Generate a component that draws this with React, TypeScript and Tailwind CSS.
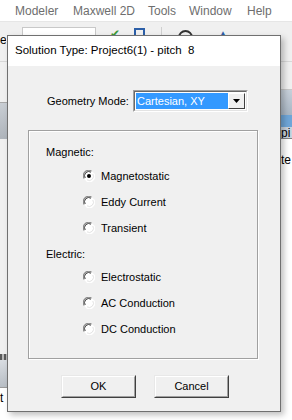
import React from 'react';

const menuItems = [
  { label: 'Modeler', w: 'w-[58px]' },
  { label: 'Maxwell 2D', w: 'w-[75px]' },
  { label: 'Tools', w: 'w-[41px]' },
  { label: 'Window', w: 'w-[58px]' },
  { label: 'Help', w: 'w-[40px]' },
];

function Radio({ checked }: { checked?: boolean }) {
  return (
    <svg width="12" height="12" viewBox="0 0 12 12" className="shrink-0">
      <circle cx="6" cy="6" r="5.5" fill="#ffffff" />
      <path d="M1.2 8.5 A5.3 5.3 0 0 1 8.5 1.2" fill="none" stroke="#8a8a8a" strokeWidth="1.2" />
      <path d="M2.2 8 A4.2 4.2 0 0 1 8 2.2" fill="none" stroke="#404040" strokeWidth="1" />
      <path d="M10.8 3.5 A5.3 5.3 0 0 1 3.5 10.8" fill="none" stroke="#ffffff" strokeWidth="1.2" />
      <path d="M9.8 4 A4.2 4.2 0 0 1 4 9.8" fill="none" stroke="#e3e3e3" strokeWidth="1" />
      {checked && <circle cx="6" cy="6" r="2" fill="#000000" />}
    </svg>
  );
}

function RadioRow({ label, checked }: { label: string; checked?: boolean }) {
  return (
    <div className="flex items-center h-[26px] pl-[54px]">
      <Radio checked={checked} />
      <span className="ml-[6px] text-[11px] text-black whitespace-nowrap">{label}</span>
    </div>
  );
}

function Button({ label }: { label: string }) {
  return (
    <div className="w-[75px] h-[23px] border border-t-[#e8e8e8] border-l-[#e8e8e8] border-r-[#404040] border-b-[#404040] bg-[#f0f0f0]">
      <div className="w-full h-full border border-t-white border-l-white border-r-[#a0a0a0] border-b-[#a0a0a0] flex items-center justify-center text-[11px] text-black">
        {label}
      </div>
    </div>
  );
}

export default function App() {
  return (
    <div className="relative w-[292px] h-[420px] overflow-hidden bg-white" style={{ fontFamily: '"Liberation Sans", Arial, sans-serif' }}>
      {/* Menu bar */}
      <div className="h-[22px] bg-white flex items-center pl-[15px] text-[12px] text-[#6e6e6e] border-b border-[#e6e6e6] whitespace-nowrap">
        {menuItems.map((m) => (
          <span key={m.label} className={`${m.w} shrink-0`}>{m.label}</span>
        ))}
      </div>

      {/* Toolbar behind the dialog */}
      <div className="h-[40px] bg-[#f0f0f0] border-b border-[#d8d8d8] flex items-start pt-[5px]">
        <span className="w-[6px] text-[12px] leading-[14px] mt-[6px] overflow-hidden text-black">e</span>
        <div className="ml-[16px] w-[74px] h-[22px] bg-white border border-[#c8c8c8]" />
        <div className="ml-[14px] mt-[2px] w-[12px] h-[10px] text-[#3c9a3c] text-[12px] leading-[10px]">✔</div>
        <div className="ml-[12px] mt-[1px] w-[11px] h-[11px] border-2 border-[#2c5fa8]" />
        <div className="ml-[16px] w-px h-[30px] bg-[#cfcfcf]" />
        <div className="ml-[16px] mt-[3px] w-[15px] h-[15px] rounded-full border-2 border-[#333]" />
        <div className="ml-[25px] mt-[2px] text-[#2c5fa8] text-[10px] leading-[10px]">▲</div>
      </div>

      <div className="flex h-[358px]">
        {/* Left slice of the app */}
        <div className="w-[7px] flex flex-col">
          <div className="h-[40px] bg-[#f0f0f0]" />
          <div className="h-px bg-[#a8a8a8]" />
          <div className="h-[36px] bg-gradient-to-b from-[#c9ced4] to-[#aeb4bb]" />
          <div className="h-[215px] bg-[#f0f0f0]" />
          <div className="h-[6px] bg-[repeating-linear-gradient(90deg,#5a5a5a_0_2px,#b8b8b8_2px_4px)]" />
          <div className="h-[27px] bg-gradient-to-b from-[#d9dde2] to-[#b8bec5]" />
          <div className="h-[20px] bg-white border-t border-[#9a9a9a] text-[12px] leading-[20px] text-black overflow-hidden">t</div>
        </div>
        <div className="flex-1" />
        {/* Right slice of the app */}
        <div className="w-[11px] flex flex-col">
          <div className="h-[27px] bg-[#f0f0f0]" />
          <div className="h-px bg-[#c8c8c8]" />
          <div className="h-[25px] bg-gradient-to-b from-[#c7d0da] to-[#a9b6c4]" />
          <div className="h-[12px] bg-[#6fa6d8]" />
          <div className="h-[12px] bg-[#c9d3de] border-b border-[#808080] text-[12px] leading-[12px] text-black overflow-hidden">pi</div>
          <div className="h-[30px] bg-white text-[12px] leading-[30px] pt-[6px] text-black overflow-hidden">te</div>
          <div className="flex-1 bg-white" />
        </div>
      </div>

      {/* Modal dialog */}
      <div className="absolute left-[7px] top-[35px] w-[274px] h-[377px] border border-[#707070] bg-[#f0f0f0] flex flex-col shadow-[3px_3px_6px_rgba(0,0,0,0.25)]">
        <div className="h-[30px] bg-white flex items-center pl-[7px] text-[11.5px] text-black whitespace-nowrap">
          Solution Type: Project6(1) - pitch&nbsp;&nbsp;8
        </div>

        <div className="flex items-center mt-[24px] h-[22px]">
          <span className="ml-[39px] w-[86px] text-[11px] text-black whitespace-nowrap">Geometry Mode:</span>
          <div className="w-[115px] h-[22px] border border-t-[#a0a0a0] border-l-[#a0a0a0] border-r-white border-b-white">
            <div className="w-full h-full border border-t-[#696969] border-l-[#696969] border-r-[#e3e3e3] border-b-[#e3e3e3] bg-white flex p-px">
              <div className="flex-1 bg-[#3399ff] text-white text-[11px] leading-[16px] pl-[1px] whitespace-nowrap">Cartesian, XY</div>
              <div className="w-[17px] border border-t-white border-l-white border-r-[#404040] border-b-[#404040] bg-[#f0f0f0] flex items-center justify-center">
                <svg width="7" height="4" viewBox="0 0 7 4"><path d="M0 0h7L3.5 4z" fill="#000" /></svg>
              </div>
            </div>
          </div>
        </div>

        <div className="ml-[20px] mt-[18px] w-[230px] h-[229px] border border-[#a0a0a0] shadow-[inset_1px_1px_0_#ffffff,1px_1px_0_#ffffff] pt-[13px]">
          <div className="pl-[17px] h-[16px] text-[11px] leading-[16px] text-black">Magnetic:</div>
          <div className="mt-[3px]">
            <RadioRow label="Magnetostatic" checked />
            <RadioRow label="Eddy Current" />
            <RadioRow label="Transient" />
          </div>
          <div className="pl-[17px] h-[16px] mt-[5px] text-[11px] leading-[16px] text-black">Electric:</div>
          <div className="mt-[2px]">
            <RadioRow label="Electrostatic" />
            <RadioRow label="AC Conduction" />
            <RadioRow label="DC Conduction" />
          </div>
        </div>

        <div className="flex mt-[16px] ml-[53px] gap-[18px]">
          <Button label="OK" />
          <Button label="Cancel" />
        </div>
      </div>
    </div>
  );
}
